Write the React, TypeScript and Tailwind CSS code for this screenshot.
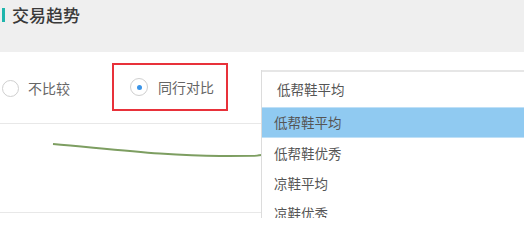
import React from "react";

const font = { fontFamily: '"Microsoft YaHei", "Noto Sans CJK SC", sans-serif' };

export default function App() {
  const options = ["低帮鞋平均", "低帮鞋优秀", "凉鞋平均", "凉鞋优秀"];
  return (
    <div className="relative w-[524px] h-[218px] overflow-hidden bg-white" style={font}>
      <div className="h-[52px] bg-[#efefef] flex items-start pt-[5px]">
        <div className="flex items-center gap-[7px] pl-[2px]">
          <div className="w-[3px] h-[14px] bg-[#1fb5ac]" />
          <span className="text-[17px] leading-[20px] text-[#3a3a3a] font-medium">交易趋势</span>
        </div>
      </div>
      <div className="h-[72px] flex items-start border-b border-[#e8e8e8]">
        <div className="flex items-center gap-[9px] pl-[2px] mt-[26px]">
          <span className="w-[17px] h-[17px] rounded-full border border-[#cfcfcf] bg-white" />
          <span className="text-[14px] text-[#666]">不比较</span>
        </div>
        <div className="ml-[42px] mt-[11px] w-[116px] h-[48px] border-2 border-[#e8313a] flex items-center pl-[16px] gap-[10px]">
          <span className="w-[18px] h-[18px] rounded-full border border-[#cfcfcf] bg-white flex items-center justify-center">
            <span className="w-[5px] h-[5px] rounded-full bg-[#3a94e8]" />
          </span>
          <span className="text-[14px] text-[#666]">同行对比</span>
        </div>
      </div>
      <div className="h-[89px] border-b border-[#e8e8e8] relative">
        <svg width="262" height="89" className="absolute left-0 top-0">
          <path d="M53 20 C 120 26, 170 32, 220 32 S 250 32, 262 31" fill="none" stroke="#7d9e61" strokeWidth="2" />
        </svg>
      </div>
      <div className="absolute left-[261px] top-[70px] w-[280px] bg-white border-l border-[#dcdcdc]">
        <div className="h-[37px] border-t-2 border-[#e6e6e6] flex items-center pl-[15px] text-[13.5px] text-[#555]">
          低帮鞋平均
        </div>
        {options.map((o, i) => (
          <div
            key={o}
            className={
              i === 0
                ? "h-[31px] bg-[#90caf1] border-y border-[#bfe0f7] flex items-center pl-[12px] text-[13.5px] text-[#555]"
                : "h-[30px] flex items-center pl-[12px] text-[13.5px] text-[#555]"
            }
          >
            {o}
          </div>
        ))}
      </div>
    </div>
  );
}
